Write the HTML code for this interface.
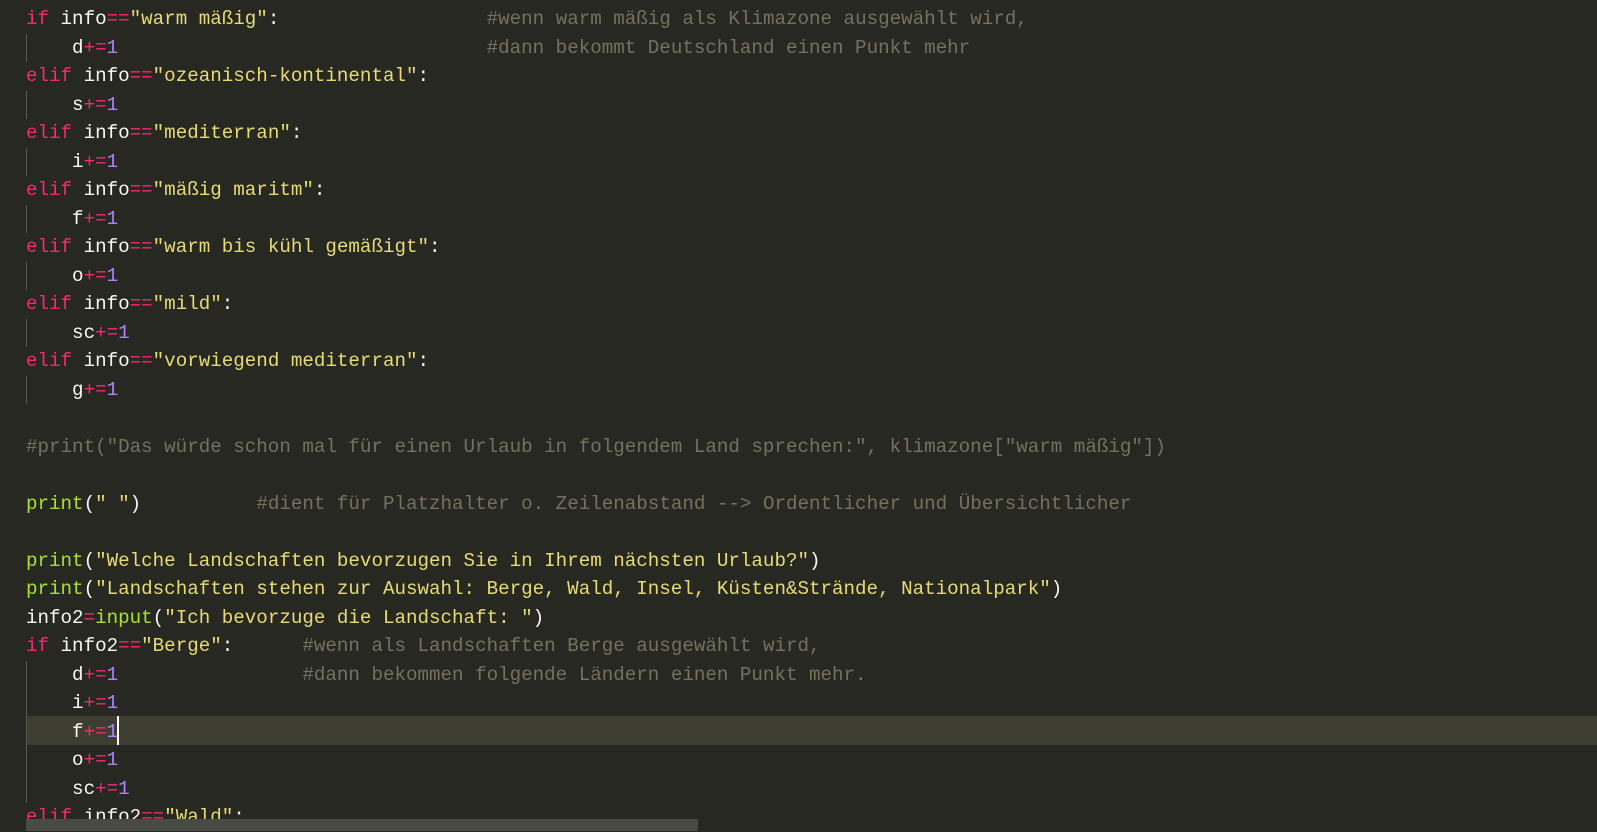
<!DOCTYPE html>
<html><head><meta charset="utf-8"><style>
html,body{margin:0;padding:0;background:#272822;width:1597px;height:831px;overflow:hidden}
#c{position:absolute;left:26px;top:5px;font-family:"Liberation Mono","DejaVu Sans Mono",monospace;font-size:19.2px;color:#f8f8f2}
.l{height:28.5px;line-height:28.5px;position:relative;white-space:pre}
.k{color:#f92672}.s{color:#e6db74}.n{color:#ae81ff}.c{color:#75715e}.b{color:#a6e22e}
.g{position:absolute;left:0;top:0;width:1px;height:28.5px;background:#5a5a52}
#hl{position:absolute;left:26px;top:716px;width:1571px;height:29px;background:#3e3d32}
#cur{position:absolute;left:117px;top:716px;width:2px;height:29px;background:#f8f8f0}
#sb{position:absolute;left:26px;top:819px;width:672px;height:12px;background:#4a4a45}
</style></head><body>
<div id="hl"></div>
<div id="c">
<div class="l"><span class="k">if</span> info<span class="k">==</span><span class="s">"warm mäßig"</span>:                  <span class="c">#wenn warm mäßig als Klimazone ausgewählt wird,</span></div>
<div class="l"><i class="g"></i>    d<span class="k">+=</span><span class="n">1</span>                                <span class="c">#dann bekommt Deutschland einen Punkt mehr</span></div>
<div class="l"><span class="k">elif</span> info<span class="k">==</span><span class="s">"ozeanisch-kontinental"</span>:</div>
<div class="l"><i class="g"></i>    s<span class="k">+=</span><span class="n">1</span></div>
<div class="l"><span class="k">elif</span> info<span class="k">==</span><span class="s">"mediterran"</span>:</div>
<div class="l"><i class="g"></i>    i<span class="k">+=</span><span class="n">1</span></div>
<div class="l"><span class="k">elif</span> info<span class="k">==</span><span class="s">"mäßig maritm"</span>:</div>
<div class="l"><i class="g"></i>    f<span class="k">+=</span><span class="n">1</span></div>
<div class="l"><span class="k">elif</span> info<span class="k">==</span><span class="s">"warm bis kühl gemäßigt"</span>:</div>
<div class="l"><i class="g"></i>    o<span class="k">+=</span><span class="n">1</span></div>
<div class="l"><span class="k">elif</span> info<span class="k">==</span><span class="s">"mild"</span>:</div>
<div class="l"><i class="g"></i>    sc<span class="k">+=</span><span class="n">1</span></div>
<div class="l"><span class="k">elif</span> info<span class="k">==</span><span class="s">"vorwiegend mediterran"</span>:</div>
<div class="l"><i class="g"></i>    g<span class="k">+=</span><span class="n">1</span></div>
<div class="l"> </div>
<div class="l"><span class="c">#print("Das würde schon mal für einen Urlaub in folgendem Land sprechen:", klimazone["warm mäßig"])</span></div>
<div class="l"> </div>
<div class="l"><span class="b">print</span>(<span class="s">" "</span>)          <span class="c">#dient für Platzhalter o. Zeilenabstand --&gt; Ordentlicher und Übersichtlicher</span></div>
<div class="l"> </div>
<div class="l"><span class="b">print</span>(<span class="s">"Welche Landschaften bevorzugen Sie in Ihrem nächsten Urlaub?"</span>)</div>
<div class="l"><span class="b">print</span>(<span class="s">"Landschaften stehen zur Auswahl: Berge, Wald, Insel, Küsten&amp;Strände, Nationalpark"</span>)</div>
<div class="l">info2<span class="k">=</span><span class="b">input</span>(<span class="s">"Ich bevorzuge die Landschaft: "</span>)</div>
<div class="l"><span class="k">if</span> info2<span class="k">==</span><span class="s">"Berge"</span>:      <span class="c">#wenn als Landschaften Berge ausgewählt wird,</span></div>
<div class="l"><i class="g"></i>    d<span class="k">+=</span><span class="n">1</span>                <span class="c">#dann bekommen folgende Ländern einen Punkt mehr.</span></div>
<div class="l"><i class="g"></i>    i<span class="k">+=</span><span class="n">1</span></div>
<div class="l"><i class="g"></i>    f<span class="k">+=</span><span class="n">1</span></div>
<div class="l"><i class="g"></i>    o<span class="k">+=</span><span class="n">1</span></div>
<div class="l"><i class="g"></i>    sc<span class="k">+=</span><span class="n">1</span></div>
<div class="l"><span class="k">elif</span> info2<span class="k">==</span><span class="s">"Wald"</span>:</div>
</div>
<div id="cur"></div>
<div id="sb"></div>
</body></html>
